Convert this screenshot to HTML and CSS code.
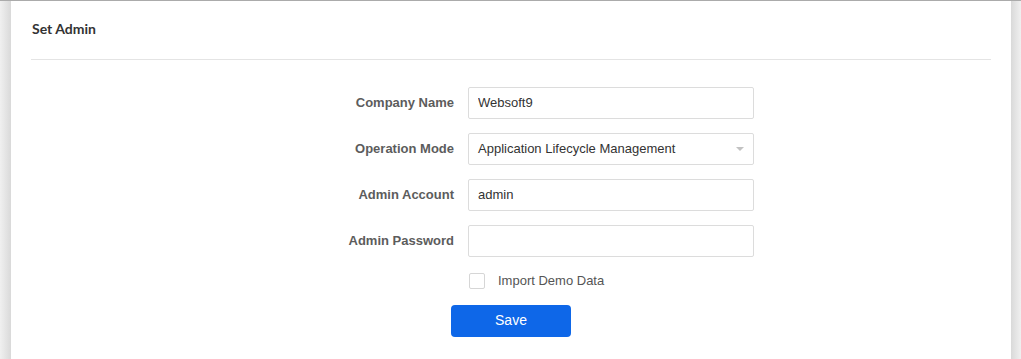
FILE: index.html
```html
<!DOCTYPE html>
<html lang="en">
<head>
  <meta charset="UTF-8">
  <meta name="viewport" content="width=device-width, initial-scale=1.0">
  <title>Set Admin</title>
  <link rel="stylesheet" href="styles.css">
</head>
<body>
  <div class="page">
    <div class="card">
      <div class="card-header">Set Admin</div>

      <form class="form" onsubmit="return false">
        <div class="row">
          <label class="label" for="company">Company Name</label>
          <input class="input" id="company" type="text" value="Websoft9">
        </div>

        <div class="row">
          <label class="label">Operation Mode</label>
          <div class="input select">
            <span>Application Lifecycle Management</span>
            <span class="arrow"></span>
          </div>
        </div>

        <div class="row">
          <label class="label" for="account">Admin Account</label>
          <input class="input" id="account" type="text" value="admin">
        </div>

        <div class="row">
          <label class="label" for="password">Admin Password</label>
          <input class="input" id="password" type="password" value="">
        </div>

        <div class="row check-row">
          <label class="check">
            <span class="box"></span>
            <span class="check-text">Import Demo Data</span>
          </label>
        </div>

        <div class="actions">
          <button class="btn-primary" type="submit">Save</button>
        </div>
      </form>
    </div>
  </div>
</body>
</html>
```

FILE: styles.css
```css
* {
  box-sizing: border-box;
}

html, body {
  margin: 0;
  height: 100%;
}

body {
  font-family: Arial, 'Liberation Sans', sans-serif;
  border-top: 1px solid #ababab;
  background: #fff;
}

.page {
  display: flex;
  min-height: 100%;
  padding: 0 10px 0 11px;
  background: linear-gradient(to right, #f0f0f0 0, #d9d9d9 11px, #d9d9d9 calc(100% - 10px), #f0f0f0 100%);
}

.card {
  flex: 1;
  background: #fff;
  padding: 0 20px;
}

.card-header {
  font-family: Lato, sans-serif;
  font-weight: 700;
  font-size: 14px;
  line-height: 17px;
  color: #333;
  padding: 19px 1px 22px;
  border-bottom: 1px solid #e4e4e4;
}

.form {
  margin: 27px 0 0 303px;
  width: 420px;
  display: flex;
  flex-direction: column;
  gap: 14px;
}

.row {
  display: flex;
  align-items: center;
  gap: 14px;
}

.label {
  width: 120px;
  text-align: right;
  font-size: 13px;
  font-weight: 700;
  color: #5c5c5c;
  padding-bottom: 2px;
}

.input {
  width: 286px;
  height: 32px;
  border: 1px solid #dcdcdc;
  border-radius: 2px;
  padding: 0 9px 2px;
  font-family: inherit;
  font-size: 13px;
  color: #333;
  outline: none;
}

.select {
  display: flex;
  align-items: center;
  justify-content: space-between;
  padding-right: 9px;
}

.arrow {
  width: 0;
  height: 0;
  margin-top: 2px;
  border-left: 4px solid transparent;
  border-right: 4px solid transparent;
  border-top: 4px solid #c2c2c2;
}

.check-row {
  height: 20px;
  padding-left: 135px;
}

.check {
  display: flex;
  align-items: center;
  gap: 13px;
  font-size: 13px;
  color: #555;
}

.check-text {
  padding-bottom: 2px;
}

.box {
  width: 16px;
  height: 16px;
  border: 1px solid #d6d6d6;
  border-radius: 2px;
  background: #fff;
}

.actions {
  margin-left: 117px;
}

.btn-primary {
  width: 120px;
  height: 32px;
  border: none;
  border-radius: 4px;
  padding: 0 0 2px;
  background: #0e67e8;
  color: #fff;
  font-family: inherit;
  font-size: 14px;
}
```
